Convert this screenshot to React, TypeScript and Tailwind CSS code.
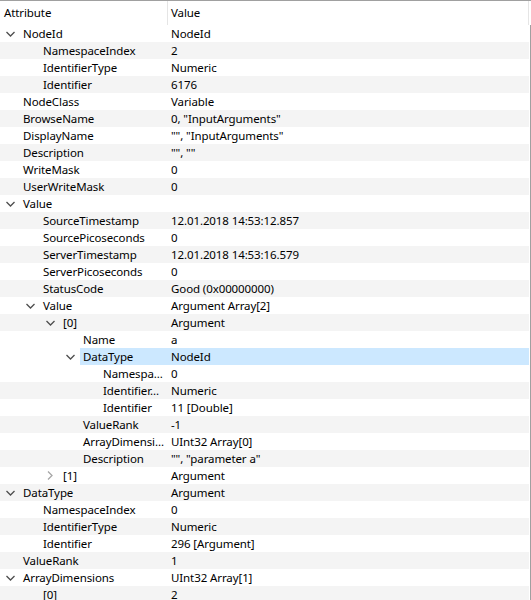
type Row = {
  level: number;
  toggle?: "open" | "closed";
  name: string;
  value: string;
  selected?: boolean;
};

const rows: Row[] = [
  { level: 0, toggle: "open", name: "NodeId", value: "NodeId" },
  { level: 1, name: "NamespaceIndex", value: "2" },
  { level: 1, name: "IdentifierType", value: "Numeric" },
  { level: 1, name: "Identifier", value: "6176" },
  { level: 0, name: "NodeClass", value: "Variable" },
  { level: 0, name: "BrowseName", value: '0, "InputArguments"' },
  { level: 0, name: "DisplayName", value: '"", "InputArguments"' },
  { level: 0, name: "Description", value: '"", ""' },
  { level: 0, name: "WriteMask", value: "0" },
  { level: 0, name: "UserWriteMask", value: "0" },
  { level: 0, toggle: "open", name: "Value", value: "" },
  { level: 1, name: "SourceTimestamp", value: "12.01.2018 14:53:12.857" },
  { level: 1, name: "SourcePicoseconds", value: "0" },
  { level: 1, name: "ServerTimestamp", value: "12.01.2018 14:53:16.579" },
  { level: 1, name: "ServerPicoseconds", value: "0" },
  { level: 1, name: "StatusCode", value: "Good (0x00000000)" },
  { level: 1, toggle: "open", name: "Value", value: "Argument Array[2]" },
  { level: 2, toggle: "open", name: "[0]", value: "Argument" },
  { level: 3, name: "Name", value: "a" },
  { level: 3, toggle: "open", name: "DataType", value: "NodeId", selected: true },
  { level: 4, name: "Namespa...", value: "0" },
  { level: 4, name: "Identifier...", value: "Numeric" },
  { level: 4, name: "Identifier", value: "11 [Double]" },
  { level: 3, name: "ValueRank", value: "-1" },
  { level: 3, name: "ArrayDimensi...", value: "UInt32 Array[0]" },
  { level: 3, name: "Description", value: '"", "parameter a"' },
  { level: 2, toggle: "closed", name: "[1]", value: "Argument" },
  { level: 0, toggle: "open", name: "DataType", value: "Argument" },
  { level: 1, name: "NamespaceIndex", value: "0" },
  { level: 1, name: "IdentifierType", value: "Numeric" },
  { level: 1, name: "Identifier", value: "296 [Argument]" },
  { level: 0, name: "ValueRank", value: "1" },
  { level: 0, toggle: "open", name: "ArrayDimensions", value: "UInt32 Array[1]" },
  { level: 1, name: "[0]", value: "2" },
];

function Chevron({ kind }: { kind: "open" | "closed" }) {
  if (kind === "open") {
    return (
      <svg width="9" height="6" viewBox="0 0 9 6" className="block">
        <polyline points="0.5,1 4.5,5 8.5,1" fill="none" stroke="#4d4d4d" strokeWidth="1.3" />
      </svg>
    );
  }
  return (
    <svg width="6" height="9" viewBox="0 0 6 9" className="block">
      <polyline points="1,0.5 5,4.5 1,8.5" fill="none" stroke="#a6a6a6" strokeWidth="1.3" />
    </svg>
  );
}

function TreeRow({ row, index }: { row: Row; index: number }) {
  const stripe = !row.selected && index % 2 === 1 ? "bg-[#f4f4f4]" : "bg-white";
  return (
    <div className={`flex h-[17px] leading-[17px] ${stripe}`}>
      <div className="flex shrink-0">
        <div style={{ width: row.level * 20 + 3 }} className="shrink-0" />
        <div className="flex w-[17px] shrink-0 items-center justify-center pr-[3px]">
          {row.toggle && <Chevron kind={row.toggle} />}
        </div>
      </div>
      <div className={`flex flex-1 ${row.selected ? "bg-[#cce8ff]" : ""}`}>
        <div
          className="shrink-0 overflow-hidden whitespace-nowrap pl-[3px]"
          style={{ width: 167 - (row.level * 20 + 20) }}
        >
          {row.name}
        </div>
        <div className="flex-1 whitespace-nowrap pl-[4px]">{row.value}</div>
      </div>
    </div>
  );
}

export default function App() {
  return (
    <div
      className="h-[600px] w-[531px] overflow-hidden border-t border-[#a0a0a0] bg-white text-[11.5px] tracking-[-0.1px] text-black"
      style={{ fontFamily: '"Segoe UI", "Noto Sans", sans-serif' }}
    >
      <div className="flex h-[24px] items-center pr-[2px]">
        <div className="h-full w-[167px] shrink-0 pl-[4px] leading-[24px]">Attribute</div>
        <div className="h-full flex-1 border-l border-r border-[#e5e5e5] pl-[3px] leading-[24px]">
          Value
        </div>
      </div>
      <div className="border-r border-[#a0a0a0] pr-px">
        {rows.map((row, i) => (
          <TreeRow key={i} row={row} index={i} />
        ))}
      </div>
    </div>
  );
}
